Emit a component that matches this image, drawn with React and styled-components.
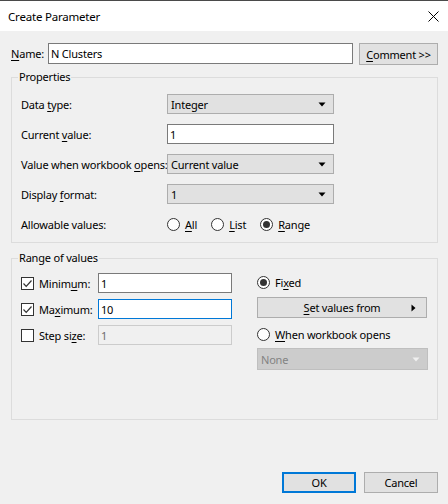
import React from "react";
import styled, { createGlobalStyle } from "styled-components";

const GlobalStyle = createGlobalStyle`
  html, body {
    margin: 0;
    padding: 0;
    background: #f0f0f0;
  }
  body {
    font-family: "Noto Sans", "DejaVu Sans", sans-serif;
    font-size: 11px;
    letter-spacing: -0.2px;
    color: #000;
  }
  * {
    box-sizing: border-box;
  }
`;

const Window = styled.div`
  width: 448px;
  height: 504px;
  display: flex;
  flex-direction: column;
  background: #f0f0f0;
  padding-bottom: 11px;
`;

const TitleBar = styled.div`
  height: 31px;
  flex: none;
  background: #fff;
  border-top: 1px solid #4a4a4a;
  display: flex;
  align-items: center;
  justify-content: space-between;
  padding: 0 9px 0 8px;
  font-size: 11.5px;
`;

const Content = styled.div`
  padding: 12px 10px 0 11px;
  display: flex;
  flex-direction: column;
`;

const NameRow = styled.div`
  display: flex;
  align-items: flex-start;
  height: 22px;
`;

const NameLabel = styled.span`
  width: 37px;
  line-height: 21px;
`;

const Mn = styled.span`
  text-decoration: underline;
  text-underline-offset: 2px;
`;

const TextBox = styled.input`
  font: inherit;
  letter-spacing: inherit;
  color: ${(p) => (p.disabled ? "#6d6d6d" : "#000")};
  width: ${(p) => p.$w}px;
  height: ${(p) => p.$h || 20}px;
  margin: 0;
  padding: 0 2px;
  background: ${(p) => (p.disabled ? "#f0f0f0" : "#fff")};
  border: 1px solid
    ${(p) => (p.$focus ? "#0078d7" : p.disabled ? "#cccccc" : "#7a7a7a")};
  border-radius: 0;
  outline: none;
`;

const Button = styled.div`
  height: ${(p) => p.$h || 21}px;
  width: ${(p) => (p.$w ? `${p.$w}px` : "auto")};
  flex: none;
  background: #e1e1e1;
  border: ${(p) => (p.$default ? "2px solid #0078d7" : "1px solid #adadad")};
  display: flex;
  align-items: center;
  justify-content: center;
  position: relative;
  padding: 0 4px;
  white-space: nowrap;
`;

const ButtonArrow = styled.svg`
  position: absolute;
  right: 10px;
  top: 50%;
  margin-top: -4px;
`;

const Group = styled.fieldset`
  margin: ${(p) => p.$mt}px 0 0 0;
  min-width: 0;
  border: 1px solid #dcdcdc;
  padding: ${(p) => p.$pad};
`;

const Legend = styled.legend`
  padding: 0 1px;
  margin-left: -3px;
  line-height: 14px;
`;

const PropGrid = styled.div`
  display: grid;
  grid-template-columns: 146px 167px;
  grid-auto-rows: 20px;
  row-gap: 10px;
  align-items: center;
`;

const Label = styled.span`
  white-space: nowrap;
`;

const Combo = styled.div`
  width: ${(p) => p.$w}px;
  height: ${(p) => p.$h || 20}px;
  background: ${(p) => (p.$disabled ? "#cccccc" : "#e1e1e1")};
  border: 1px solid ${(p) => (p.$disabled ? "#bfbfbf" : "#adadad")};
  color: ${(p) => (p.$disabled ? "#838383" : "#000")};
  display: flex;
  align-items: center;
  justify-content: space-between;
  padding: 0 7px 0 3px;
`;

const RadioRow = styled.div`
  display: flex;
  align-items: center;
  gap: 14px;
  height: ${(p) => p.$h || 20}px;
`;

const Option = styled.span`
  display: inline-flex;
  align-items: center;
  gap: 5px;
`;

const RadioDot = styled.span`
  width: 13px;
  height: 13px;
  border-radius: 50%;
  border: 1px solid #333;
  background: #fff;
  display: inline-flex;
  align-items: center;
  justify-content: center;
  flex: none;
  &::after {
    content: "";
    width: 7px;
    height: 7px;
    border-radius: 50%;
    background: ${(p) => (p.$on ? "#333" : "transparent")};
  }
`;

const CheckBox = styled.span`
  width: 13px;
  height: 13px;
  border: 1px solid #333;
  background: #fff;
  display: inline-flex;
  align-items: center;
  justify-content: center;
  flex: none;
`;

const RangeBody = styled.div`
  display: grid;
  grid-template-columns: 210px 171px;
  column-gap: 26px;
  align-items: start;
`;

const LeftCol = styled.div`
  display: flex;
  flex-direction: column;
  gap: 6px;
`;

const RangeRow = styled.div`
  display: flex;
  align-items: center;
  height: 20px;
`;

const CheckLabel = styled.span`
  width: 77px;
  flex: none;
  display: inline-flex;
  align-items: center;
  gap: 5px;
  white-space: nowrap;
`;

const RightCol = styled.div`
  display: flex;
  flex-direction: column;
  padding-top: 1px;
`;

const Footer = styled.div`
  margin-top: auto;
  display: flex;
  justify-content: flex-end;
  gap: 8px;
  padding-right: 10px;
`;

function DownArrow({ color = "#000" }) {
  return (
    <svg width="8" height="5" viewBox="0 0 8 5">
      <polygon points="0.5,0.5 7.5,0.5 4,4.5" fill={color} />
    </svg>
  );
}

function Check() {
  return (
    <svg width="11" height="11" viewBox="0 0 11 11">
      <polyline
        points="1.5,5.5 4.2,8.3 9.5,2.5"
        fill="none"
        stroke="#333"
        strokeWidth="1.2"
      />
    </svg>
  );
}

export default function App() {
  return (
    <>
      <GlobalStyle />
      <Window>
        <TitleBar>
          <span>Create Parameter</span>
          <svg width="11" height="11" viewBox="0 0 11 11">
            <path d="M0.5 0.5 L10.5 10.5 M10.5 0.5 L0.5 10.5" stroke="#000" strokeWidth="1" />
          </svg>
        </TitleBar>

        <Content>
          <NameRow>
            <NameLabel>
              <Mn>N</Mn>ame:
            </NameLabel>
            <TextBox $w={305} $h={21} readOnly defaultValue="N Clusters" />
            <Button $w={79} $h={22} style={{ marginLeft: 6 }}>
              <span>
                <Mn>C</Mn>omment &gt;&gt;
              </span>
            </Button>
          </NameRow>

          <Group $mt={5} $pad="10px 9px 8px 9px">
            <Legend>Properties</Legend>
            <PropGrid>
              <Label>
                Data <Mn>t</Mn>ype:
              </Label>
              <Combo $w={167}>
                <span>Integer</span>
                <DownArrow />
              </Combo>

              <Label>
                Current <Mn>v</Mn>alue:
              </Label>
              <TextBox $w={167} readOnly defaultValue="1" />

              <Label>
                Value when workbook <Mn>o</Mn>pens:
              </Label>
              <Combo $w={167}>
                <span>Current value</span>
                <DownArrow />
              </Combo>

              <Label>
                Display <Mn>f</Mn>ormat:
              </Label>
              <Combo $w={167}>
                <span>1</span>
                <DownArrow />
              </Combo>

              <Label>Allowable values:</Label>
              <RadioRow>
                <Option>
                  <RadioDot />
                  <span>
                    <Mn>A</Mn>ll
                  </span>
                </Option>
                <Option>
                  <RadioDot />
                  <span>
                    <Mn>L</Mn>ist
                  </span>
                </Option>
                <Option>
                  <RadioDot $on />
                  <span>
                    <Mn>R</Mn>ange
                  </span>
                </Option>
              </RadioRow>
            </PropGrid>
          </Group>

          <Group $mt={8} $pad="8px 9px 49px 9px">
            <Legend>Range of values</Legend>
            <RangeBody>
              <LeftCol>
                <RangeRow>
                  <CheckLabel>
                    <CheckBox>
                      <Check />
                    </CheckBox>
                    <span>
                      Minim<Mn>u</Mn>m:
                    </span>
                  </CheckLabel>
                  <TextBox $w={134} readOnly defaultValue="1" />
                </RangeRow>
                <RangeRow>
                  <CheckLabel>
                    <CheckBox>
                      <Check />
                    </CheckBox>
                    <span>
                      Ma<Mn>x</Mn>imum:
                    </span>
                  </CheckLabel>
                  <TextBox $w={134} $focus readOnly defaultValue="10" />
                </RangeRow>
                <RangeRow>
                  <CheckLabel>
                    <CheckBox />
                    <span>
                      Step si<Mn>z</Mn>e:
                    </span>
                  </CheckLabel>
                  <TextBox $w={134} disabled defaultValue="1" />
                </RangeRow>
              </LeftCol>

              <RightCol>
                <RadioRow $h={16}>
                  <Option>
                    <RadioDot $on />
                    <span>
                      Fi<Mn>x</Mn>ed
                    </span>
                  </Option>
                </RadioRow>
                <Button $w={170} style={{ marginTop: 7 }}>
                  <span>
                    <Mn>S</Mn>et values from
                  </span>
                  <ButtonArrow width="5" height="8" viewBox="0 0 5 8">
                    <polygon points="0.5,0.5 4.5,4 0.5,7.5" fill="#000" />
                  </ButtonArrow>
                </Button>
                <RadioRow $h={16} style={{ marginTop: 8 }}>
                  <Option>
                    <RadioDot />
                    <span>
                      <Mn>W</Mn>hen workbook opens
                    </span>
                  </Option>
                </RadioRow>
                <Combo $w={171} $h={22} $disabled style={{ marginTop: 6 }}>
                  <span>None</span>
                  <DownArrow color="#f0f0f0" />
                </Combo>
              </RightCol>
            </RangeBody>
          </Group>
        </Content>

        <Footer>
          <Button $w={74} $default>
            OK
          </Button>
          <Button $w={74}>Cancel</Button>
        </Footer>
      </Window>
    </>
  );
}
